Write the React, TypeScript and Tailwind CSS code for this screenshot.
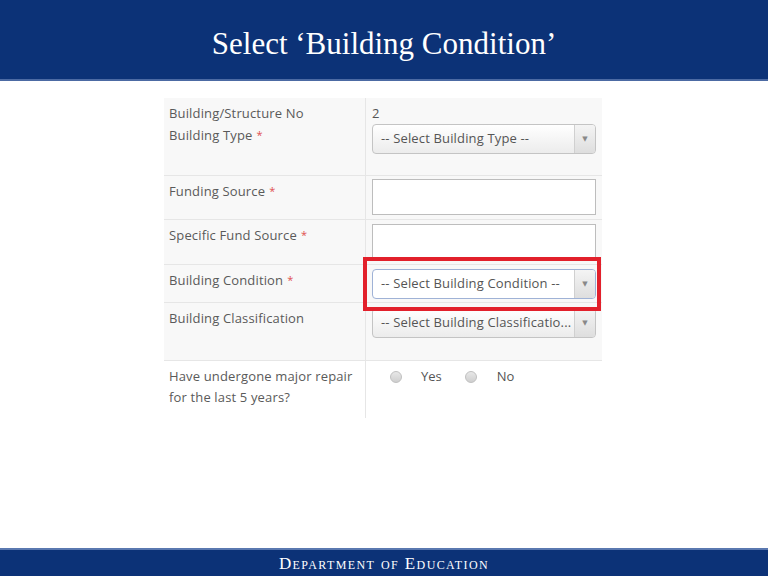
import React from "react";

const labelCls = "text-[13px] leading-[20px] text-[#5a5a5a] tracking-[0.15px]";

function Star() {
  return <span className="text-[#e05050] text-[11px] align-top ml-[4px]">*</span>;
}

function Select({ text, focused }: { text: string; focused?: boolean }) {
  return (
    <div
      className={
        "flex h-[30px] w-[224px] rounded-[4px] border overflow-hidden " +
        (focused
          ? "border-[#9fb2d6] bg-white"
          : "border-[#c4c4c4] bg-gradient-to-b from-white to-[#ececec]")
      }
    >
      <div className="flex-1 flex items-center pl-[8px] text-[13px] text-[#555] whitespace-nowrap overflow-hidden tracking-[0.15px]">
        {text}
      </div>
      <div className="w-[21px] border-l border-[#d0d0d0] bg-gradient-to-b from-[#f4f4f4] to-[#dedede] flex items-center justify-center">
        <span className="text-[7px] text-[#888]">▼</span>
      </div>
    </div>
  );
}

function Input({ h }: { h: number }) {
  return (
    <div
      className={
        "w-[224px] bg-white border border-[#bdbdbd] " + (h === 36 ? "h-[36px]" : "h-[35px]")
      }
    />
  );
}

function Radio() {
  return (
    <span className="inline-block w-[12px] h-[12px] rounded-full border border-[#c0c0c0] bg-gradient-to-b from-[#e8e8e8] to-[#cfcfcf]" />
  );
}

export default function App() {
  return (
    <div
      className="h-[576px] w-[768px] flex flex-col bg-white"
      style={{ fontFamily: '"Open Sans", "DejaVu Sans", sans-serif' }}
    >
      <header className="h-[81px] bg-[#0c3277] border-b-[2px] border-[#4c6aa3] flex items-center justify-center">
        <h1
          className="text-white text-[31px] leading-none pt-[7px]"
          style={{ fontFamily: '"Liberation Serif", "DejaVu Serif", serif' }}
        >
          Select ‘Building Condition’
        </h1>
      </header>

      <main className="flex-1 pt-[17px] pl-[164px]">
        <div className="relative w-[438px]">
          <div className="bg-[#f8f8f8]">
            {/* Row 1 */}
            <div className="flex h-[78px] border-b border-[#e6e6e6]">
              <div className="w-[202px] border-r border-[#e6e6e6] pl-[5px] pt-[5px]">
                <div className={labelCls}>Building/Structure No</div>
                <div className={labelCls + " mt-[2px]"}>
                  Building Type<Star />
                </div>
              </div>
              <div className="flex-1 pl-[6px] pt-[5px]">
                <div className="text-[13px] leading-[20px] text-[#555]">2</div>
                <div className="mt-[1px]">
                  <Select text="-- Select Building Type --" />
                </div>
              </div>
            </div>
            {/* Row 2 */}
            <div className="flex h-[44px] border-b border-[#e6e6e6]">
              <div className="w-[202px] border-r border-[#e6e6e6] pl-[5px] pt-[5px]">
                <div className={labelCls}>
                  Funding Source<Star />
                </div>
              </div>
              <div className="flex-1 pl-[6px] pt-[3px]">
                <Input h={36} />
              </div>
            </div>
            {/* Row 3 */}
            <div className="flex h-[45px] border-b border-[#e6e6e6]">
              <div className="w-[202px] border-r border-[#e6e6e6] pl-[5px] pt-[5px]">
                <div className={labelCls}>
                  Specific Fund Source<Star />
                </div>
              </div>
              <div className="flex-1 pl-[6px] pt-[4px]">
                <Input h={35} />
              </div>
            </div>
            {/* Row 4 */}
            <div className="flex h-[38px] border-b border-[#e6e6e6]">
              <div className="w-[202px] border-r border-[#e6e6e6] pl-[5px] pt-[5px]">
                <div className={labelCls}>
                  Building Condition<Star />
                </div>
              </div>
              <div className="flex-1 pl-[6px] pt-[4px]">
                <Select text="-- Select Building Condition --" focused />
              </div>
            </div>
            {/* Row 5 */}
            <div className="flex h-[58px] border-b border-[#e6e6e6]">
              <div className="w-[202px] border-r border-[#e6e6e6] pl-[5px] pt-[5px]">
                <div className={labelCls}>Building Classification</div>
              </div>
              <div className="flex-1 pl-[6px] pt-[5px]">
                <Select text="-- Select Building Classificatio..." />
              </div>
            </div>
          </div>
          {/* Row 6 */}
          <div className="flex h-[57px] bg-white">
            <div className="w-[202px] border-r border-[#e6e6e6] pl-[5px] pt-[5px]">
              <div className={labelCls + " tracking-[0.4px]"}>Have undergone major repair</div>
              <div className={labelCls + " mt-[1px] tracking-[0.4px]"}>for the last 5 years?</div>
            </div>
            <div className="flex-1 pl-[24px] pt-[6px] flex items-start">
              <div className="flex items-center h-[20px] text-[13px] text-[#555]">
                <Radio />
                <span className="ml-[19px]">Yes</span>
                <span className="ml-[23px] flex">
                  <Radio />
                </span>
                <span className="ml-[20px]">No</span>
              </div>
            </div>
          </div>

          {/* Highlight box */}
          <div className="absolute left-[199px] top-[159px] w-[238px] h-[54px] border-[4px] border-[#e2202b] pointer-events-none" />
        </div>
      </main>

      <footer className="h-[28px] bg-[#0c3277] border-t-[2px] border-[#5a78b0] flex items-center justify-center">
        <span
          className="text-white text-[17px] leading-none tracking-[1.4px]"
          style={{ fontFamily: '"Liberation Serif", "DejaVu Serif", serif', fontVariant: "small-caps" }}
        >
          Department of Education
        </span>
      </footer>
    </div>
  );
}
